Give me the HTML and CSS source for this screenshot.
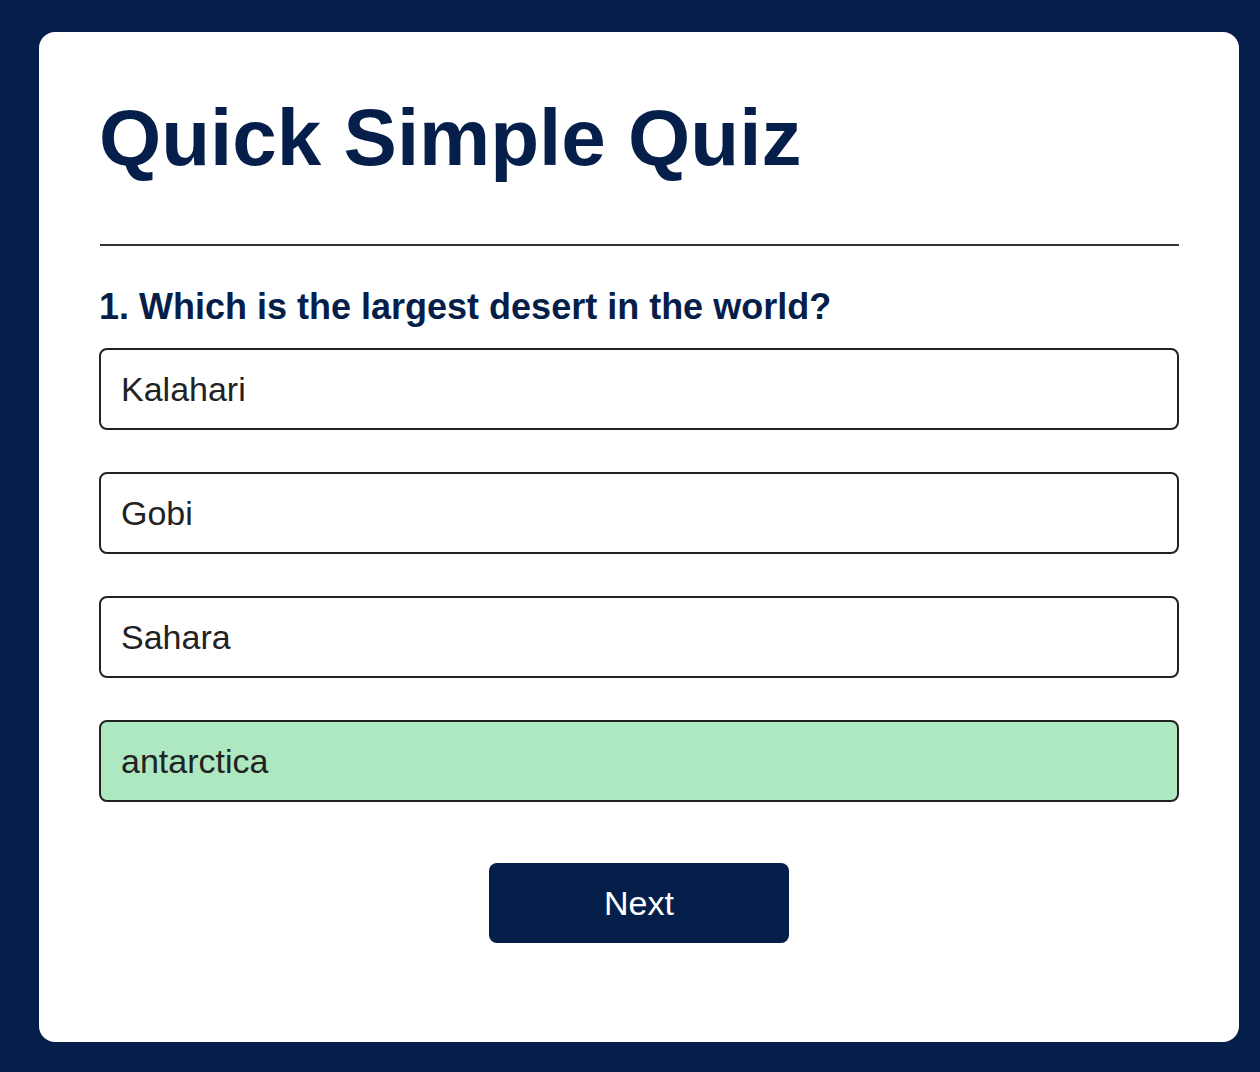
FILE: index.html
```html
<!DOCTYPE html>
<html lang="en">
<head>
<meta charset="utf-8">
<title>Quick Simple Quiz</title>
<link rel="stylesheet" href="styles.css">
</head>
<body>
<main class="card">
  <h1 class="title">Quick Simple Quiz</h1>
  <hr class="divider">
  <h2 class="question">1. Which is the largest desert in the world?</h2>
  <div class="answers">
    <button class="answer">Kalahari</button>
    <button class="answer">Gobi</button>
    <button class="answer">Sahara</button>
    <button class="answer correct">antarctica</button>
  </div>
  <div class="actions">
    <button class="next">Next</button>
  </div>
</main>
</body>
</html>
```
FILE: styles.css
```css
html, body {
  margin: 0;
  padding: 0;
}
body {
  background: #061f4a;
  font-family: "Liberation Sans", Arial, Helvetica, sans-serif;
  padding: 32px 21px 30px 39px;
  min-height: 1072px;
  box-sizing: border-box;
}
.card {
  background: #ffffff;
  width: 1200px;
  box-sizing: border-box;
  border-radius: 16px;
  padding: 60px 60px 99px 60px;
}
.title {
  margin: 0;
  font-size: 80px;
  font-weight: 700;
  line-height: normal;
  color: #061f4a;
}
.divider {
  margin: 60px 0 0 1px;
  border: 0;
  border-top: 2px solid #333333;
  height: 0;
}
.question {
  margin: 40px 0 20px;
  font-size: 36px;
  font-weight: 700;
  line-height: normal;
  color: #061f4a;
}
.answers {
  display: flex;
  flex-direction: column;
  gap: 42px;
}
.answer {
  display: flex;
  align-items: center;
  height: 82px;
  box-sizing: border-box;
  width: 100%;
  padding: 0 20px;
  background: #ffffff;
  border: 2px solid #222222;
  border-radius: 8px;
  font-family: inherit;
  font-size: 34px;
  line-height: normal;
  color: #222222;
  text-align: left;
  cursor: pointer;
}
.answer.correct {
  background: #ade8c1;
}
.actions {
  display: flex;
  justify-content: center;
  margin-top: 61px;
}
.next {
  width: 300px;
  height: 80px;
  border: 0;
  border-radius: 8px;
  background: #061f4a;
  color: #ffffff;
  font-family: inherit;
  font-size: 34px;
  line-height: normal;
  cursor: pointer;
}
```
